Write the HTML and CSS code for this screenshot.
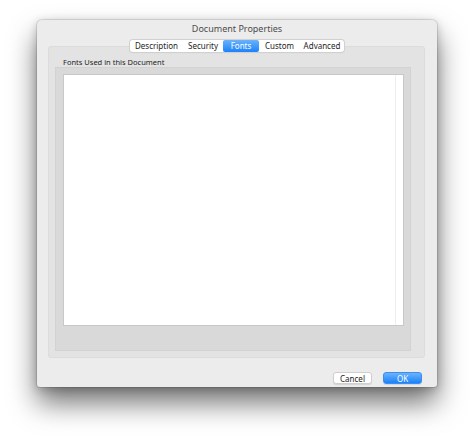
FILE: index.html
```html
<!DOCTYPE html>
<html lang="en">
<head>
    <meta charset="UTF-8">
    <title>Document Properties</title>
    <link rel="stylesheet" href="styles.css">
</head>
<body>
    <div class="window">
        <div class="titlebar">Document Properties</div>
        <div class="tabs">
            <span class="tab t-desc">Description</span>
            <span class="tab t-sec">Security</span>
            <span class="tab t-fonts active">Fonts</span>
            <span class="tab t-cust">Custom</span>
            <span class="tab t-adv">Advanced</span>
        </div>
        <div class="panel">
            <div class="label">Fonts Used in this Document</div>
            <div class="group">
                <div class="list"></div>
            </div>
        </div>
        <div class="buttons">
            <button class="btn">Cancel</button>
            <button class="btn ok">OK</button>
        </div>
    </div>
</body>
</html>
```
FILE: styles.css
```css
body{
    margin: 0;
    min-height: 440px;
    background: #fff;
    font-family: "Noto Sans", "DejaVu Sans", sans-serif;
    color: #2a2a2a;
    overflow: hidden;
}
.window{
    margin: 20px 0 0 37px;
    width: 400px;
    height: 367px;
    background: #ececec;
    border-radius: 5px 5px 3px 3px;
    box-shadow: 0 0 0 1px rgba(0,0,0,.1), 0 2px 10px rgba(0,0,0,.2), 0 16px 28px rgba(0,0,0,.55);
    display: flex;
    flex-direction: column;
}
.titlebar{
    height: 16px;
    padding-top: 1px;
    line-height: 16px;
    text-align: center;
    font-size: 9px;
    color: #4d4d4d;
}
.tabs{
    align-self: center;
    display: flex;
    height: 12px;
    margin-top: 3px;
    margin-bottom: -6px;
    background: #fff;
    border-radius: 3px;
    box-shadow: 0 0 0 1px #d0d0d0, 0 1px 1px rgba(0,0,0,.12);
    position: relative;
    z-index: 1;
}
.tab{
    font-size: 8px;
    line-height: 12px;
    text-align: center;
    color: #1e1e1e;
}
.t-desc{ width: 53px; }
.t-sec{ width: 40px; }
.t-fonts{ width: 36px; }
.t-cust{ width: 41px; }
.t-adv{ width: 44px; }
.tab.active{
    background: linear-gradient(#6cb3fa, #1a82fb);
    color: #fff;
    border-radius: 2px;
}
.panel{
    margin: 0 12px 0 11px;
    height: 310px;
    background: #e3e3e3;
    border: 1px solid #dcdcdc;
    border-radius: 3px;
    display: flex;
    flex-direction: column;
}
.label{
    font-size: 7.5px;
    padding: 10px 0 0 14px;
    height: 10px;
    line-height: 10px;
    color: #222;
}
.group{
    margin: 0 13px 6px 6px;
    flex: 1;
    background: #d9d9d9;
    border: 1px solid #d2d2d2;
    padding: 6px 6px 24px 7px;
    display: flex;
}
.list{
    flex: 1;
    background: #fff;
    border: 1px solid #c8c8c8;
    box-shadow: inset -7px 0 0 #fff, inset -8px 0 0 #ededed;
}
.buttons{
    display: flex;
    justify-content: flex-end;
    gap: 11px;
    padding: 14px 15px 0 0;
}
.btn{
    width: 39px;
    height: 12px;
    padding: 0;
    font-family: inherit;
    font-size: 8px;
    line-height: 11px;
    background: #fff;
    color: #222;
    border: 1px solid #cfcfcf;
    border-radius: 3px;
    box-shadow: 0 1px 1px rgba(0,0,0,.1);
}
.btn.ok{
    background: linear-gradient(#6cb3fa, #1a82fb);
    border-color: #3b8ef0;
    color: #fff;
}
```
